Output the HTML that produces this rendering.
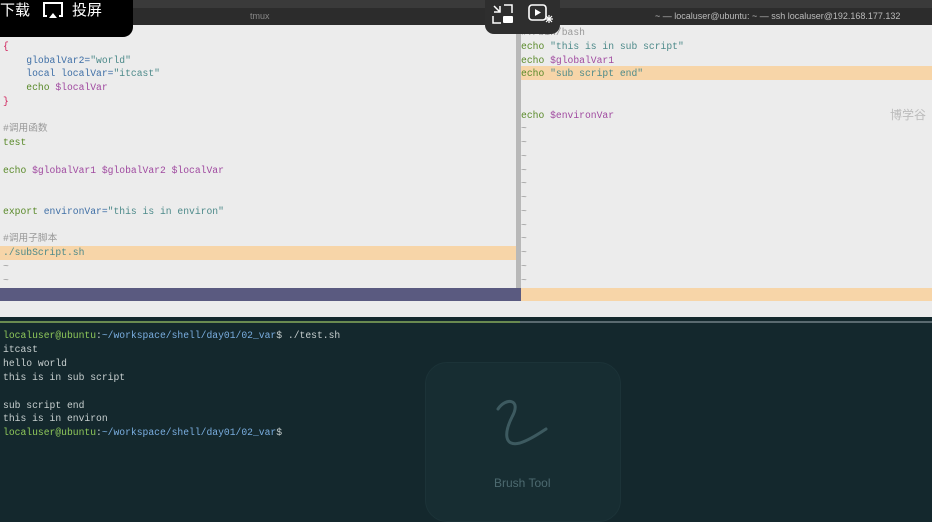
<!DOCTYPE html>
<html><head><meta charset="utf-8"><style>
*{margin:0;padding:0;box-sizing:border-box}
body{width:932px;height:522px;overflow:hidden;background:#14282d;position:relative;font-family:"Liberation Mono","Noto Sans CJK SC",monospace;font-size:9.7px}
.abs{position:absolute}
.ln{position:absolute;left:3px;height:13.75px;line-height:13.75px;white-space:pre}
.g{color:#5a8a2a}.b{color:#3f6fa6}.s{color:#4d8a8a}.p{color:#a04aa0}.r{color:#d0205a}.c{color:#777}.t{color:#999}
.tl{position:absolute;left:3px;height:13.9px;line-height:13.9px;white-space:pre;color:#c8d0d0}
.tg{color:#8fc85a}.tb{color:#7aaee0}
</style></head><body>
<div class="abs" style="left:0;top:0;width:932px;height:8px;background:#3a3a3a"></div>
<div class="abs" style="left:0;top:8px;width:932px;height:17px;background:#2c2c2c;color:#888;font-family:'Liberation Sans',sans-serif;font-size:9px;line-height:17px">
<span class="abs" style="left:250px">tmux</span>
<span class="abs" style="left:655px;color:#bbb">~ — localuser@ubuntu: ~ — ssh localuser@192.168.177.132</span></div>
<div class="abs" style="left:0;top:25px;width:932px;height:292px;background:#ececec"></div>
<div class="abs" style="left:516px;top:25px;width:5px;height:263px;background:#b8b8b8"></div>
<div class="abs" style="left:0;top:288px;width:521px;height:13px;background:#5a5a80"></div>
<div class="abs" style="left:521px;top:288px;width:411px;height:13px;background:#f7d5a8"></div>
<div class="abs" style="left:0;top:246px;width:516px;height:13.75px;background:#f7d5a8"></div>
<div class="abs" style="left:521px;top:66px;width:411px;height:13.75px;background:#f7d5a8"></div>
<div class="abs" style="left:0;top:321px;width:520px;height:2px;background:#6a8a50"></div>
<div class="abs" style="left:520px;top:321px;width:412px;height:2px;background:#5a6a70"></div>
<div id="L" style="position:absolute;left:0;top:26px">
<div class="ln c" style="top:0">function test()</div>
<div class="ln r" style="top:13.75px">{</div>
<div class="ln" style="top:27.5px">    <span class="b">globalVar2=</span><span class="s">"world"</span></div>
<div class="ln" style="top:41.25px">    <span class="b">local localVar=</span><span class="s">"itcast"</span></div>
<div class="ln" style="top:55px">    <span class="g">echo </span><span class="p">$localVar</span></div>
<div class="ln r" style="top:68.75px">}</div>
<div class="ln t" style="top:96.25px">#调用函数</div>
<div class="ln g" style="top:110px">test</div>
<div class="ln" style="top:137.5px"><span class="g">echo </span><span class="p">$globalVar1 $globalVar2 $localVar</span></div>
<div class="ln" style="top:178.75px"><span class="g">export </span><span class="b">environVar=</span><span class="s">"this is in environ"</span></div>
<div class="ln t" style="top:206.25px">#调用子脚本</div>
<div class="ln s" style="top:220px">./subScript.sh</div>
<div class="ln t" style="top:233.75px">~</div>
<div class="ln t" style="top:247.5px">~</div>
</div>
<div style="position:absolute;left:518px;top:26px">
<div class="ln t" style="top:0">#!/bin/bash</div>
<div class="ln" style="top:13.75px"><span class="g">echo </span><span class="s">"this is in sub script"</span></div>
<div class="ln" style="top:27.5px"><span class="g">echo </span><span class="p">$globalVar1</span></div>
<div class="ln" style="top:41.25px"><span class="g">echo </span><span class="s">"sub script end"</span></div>
<div class="ln" style="top:82.5px"><span class="g">echo </span><span class="p">$environVar</span></div>
<div class="ln t" style="top:96.25px">~</div><div class="ln t" style="top:110px">~</div><div class="ln t" style="top:123.75px">~</div><div class="ln t" style="top:137.5px">~</div><div class="ln t" style="top:151.25px">~</div><div class="ln t" style="top:165px">~</div><div class="ln t" style="top:178.75px">~</div><div class="ln t" style="top:192.5px">~</div><div class="ln t" style="top:206.25px">~</div><div class="ln t" style="top:220px">~</div><div class="ln t" style="top:233.75px">~</div><div class="ln t" style="top:247.5px">~</div>
</div>
<div class="abs" style="left:890px;top:106px;color:#bbb;font-family:'Noto Sans CJK SC',sans-serif;font-size:12px">博学谷</div>
<div class="abs" style="left:425px;top:362px;width:196px;height:160px;border-radius:22px;background:#172d32;border:1px solid #1c3338"></div>
<svg class="abs" style="left:490px;top:395px" width="70" height="60" viewBox="0 0 70 60"><path d="M8 14 C16 2 32 4 22 22 C14 38 14 52 30 48 C40 45 50 38 56 34" fill="none" stroke="#3d5a60" stroke-width="3" stroke-linecap="round"/></svg>
<div class="abs" style="left:494px;top:476px;color:#4d6a70;font-family:'Liberation Sans',sans-serif;font-size:12px">Brush Tool</div>
<div style="position:absolute;left:0;top:329px">
<div class="tl" style="top:0"><span class="tg">localuser@ubuntu</span>:<span class="tb">~/workspace/shell/day01/02_var</span>$ ./test.sh</div>
<div class="tl" style="top:13.9px">itcast</div>
<div class="tl" style="top:27.8px">hello world</div>
<div class="tl" style="top:41.7px">this is in sub script</div>
<div class="tl" style="top:69.5px">sub script end</div>
<div class="tl" style="top:83.4px">this is in environ</div>
<div class="tl" style="top:97.3px"><span class="tg">localuser@ubuntu</span>:<span class="tb">~/workspace/shell/day01/02_var</span>$</div>
</div>
<div class="abs" style="left:-10px;top:-10px;width:143px;height:47px;background:#000;border-radius:10px;color:#fff;font-family:'Noto Sans CJK SC',sans-serif;font-size:15px;line-height:20px">
<span class="abs" style="left:10px;top:10px">下载</span>
<svg class="abs" style="left:52px;top:11px" width="22" height="18" viewBox="0 0 22 18"><path d="M5 15H2V2h18v13h-3" fill="none" stroke="#fff" stroke-width="2"/><path d="M7 17l4-5 4 5z" fill="#fff"/></svg>
<span class="abs" style="left:82px;top:10px">投屏</span></div>
<div class="abs" style="left:485px;top:-8px;width:75px;height:42px;background:#2e2e2e;border-radius:9px">
<svg class="abs" style="left:7px;top:12px" width="22" height="20" viewBox="0 0 22 20"><path d="M2 2l6 6M2 8h6V2" fill="none" stroke="#fff" stroke-width="1.5"/><path d="M12 1h8v8M1 12v7h8" fill="none" stroke="#fff" stroke-width="1.5"/><rect x="11" y="12" width="10" height="7" rx="1" fill="#fff"/></svg>
<svg class="abs" style="left:42px;top:11px" width="28" height="22" viewBox="0 0 28 22"><rect x="2" y="2" width="17" height="15" rx="3" fill="none" stroke="#fff" stroke-width="1.6"/><path d="M8 6v7l6-3.5z" fill="#fff"/><path d="M22 12v8M18 16h8M19 13l6 6M25 13l-6 6" stroke="#fff" stroke-width="1.2"/></svg>
</div>
</body></html>
